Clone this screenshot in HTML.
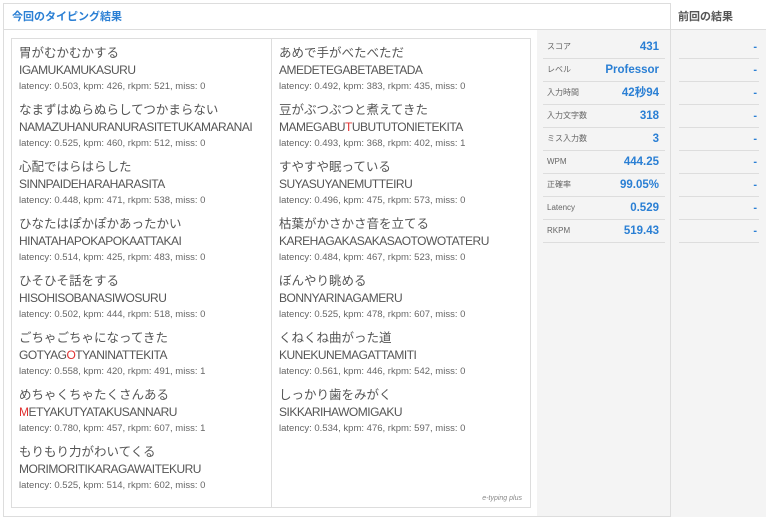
<!DOCTYPE html>
<html><head><meta charset="utf-8"><style>
*{margin:0;padding:0;box-sizing:border-box}
body{width:768px;height:520px;background:#fff;font-family:"Liberation Sans","Noto Sans CJK JP",sans-serif;color:#555;position:relative;overflow:hidden}
.outer{position:absolute;left:3px;top:3px;width:763px;height:514px;border:1px solid #ddd;background:#fff}
.hdr{position:absolute;left:3px;top:3px;width:667px;height:27px;border-bottom:1px solid #ddd}
.title{position:absolute;left:12px;top:8px;font-size:11px;font-weight:bold;color:#2a7fd4}
.rcol{position:absolute;left:670px;top:3px;width:96px;height:514px;border-left:1px solid #ddd;background:#f4f4f4}
.rhdr{position:absolute;left:0;top:0;width:95px;height:27px;background:#fff;border-bottom:1px solid #ddd;font-size:11px;font-weight:bold;color:#555;padding:5px 0 0 7px}
.stat{position:absolute;left:537px;top:30px;width:133px;height:486px;background:#f4f4f4}
.box{position:absolute;left:11px;top:38px;width:520px;height:470px;border:1px solid #ddd;background:#fff}
.div{position:absolute;left:259px;top:0;width:1px;height:468px;background:#ddd}
.e{position:absolute;width:255px}
.j{font-size:12.5px;height:17px;line-height:17px;color:#555}
.r{font-size:12px;letter-spacing:-0.5px;height:17px;line-height:17px;color:#555;white-space:nowrap}
.s{font-size:9.5px;height:16px;line-height:16px;color:#666}
.red{color:#e03030}
.row{position:absolute;left:6px;width:122px;height:23px;border-bottom:1px solid #ddd;line-height:22px}
.row .l{position:absolute;left:4px;top:0;font-size:8px;color:#666}
.row .v{position:absolute;right:6px;top:0;font-size:11.5px;font-weight:bold;color:#2a7fd4}
.rr{position:absolute;left:8px;width:80px;height:23px;border-bottom:1px solid #ddd;line-height:22px}
.rr span{position:absolute;right:2px;top:0;font-size:11px;font-weight:bold;color:#2a7fd4}
.foot{position:absolute;right:8px;bottom:5px;font-size:7px;font-style:italic;color:#888}
</style></head><body>
<div class="outer"></div>
<div class="hdr"></div>
<div class="title">今回のタイピング結果</div>
<div class="stat">
<div class="row" style="top:6px"><span class="l">スコア</span><span class="v">431</span></div>
<div class="row" style="top:29px"><span class="l">レベル</span><span class="v">Professor</span></div>
<div class="row" style="top:52px"><span class="l">入力時間</span><span class="v">42秒94</span></div>
<div class="row" style="top:75px"><span class="l">入力文字数</span><span class="v">318</span></div>
<div class="row" style="top:98px"><span class="l">ミス入力数</span><span class="v">3</span></div>
<div class="row" style="top:121px"><span class="l">WPM</span><span class="v">444.25</span></div>
<div class="row" style="top:144px"><span class="l">正確率</span><span class="v">99.05%</span></div>
<div class="row" style="top:167px"><span class="l">Latency</span><span class="v">0.529</span></div>
<div class="row" style="top:190px"><span class="l">RKPM</span><span class="v">519.43</span></div>
</div>
<div class="rcol">
<div class="rhdr">前回の結果</div>
<div class="rr" style="top:33px"><span>-</span></div>
<div class="rr" style="top:56px"><span>-</span></div>
<div class="rr" style="top:79px"><span>-</span></div>
<div class="rr" style="top:102px"><span>-</span></div>
<div class="rr" style="top:125px"><span>-</span></div>
<div class="rr" style="top:148px"><span>-</span></div>
<div class="rr" style="top:171px"><span>-</span></div>
<div class="rr" style="top:194px"><span>-</span></div>
<div class="rr" style="top:217px"><span>-</span></div>
</div>
<div class="box">
<div class="div"></div>
<div class="e" style="left:7px;top:6px"><div class="j">胃がむかむかする</div><div class="r">IGAMUKAMUKASURU</div><div class="s">latency: 0.503, kpm: 426, rkpm: 521, miss: 0</div></div>
<div class="e" style="left:7px;top:63px"><div class="j">なまずはぬらぬらしてつかまらない</div><div class="r">NAMAZUHANURANURASITETUKAMARANAI</div><div class="s">latency: 0.525, kpm: 460, rkpm: 512, miss: 0</div></div>
<div class="e" style="left:7px;top:120px"><div class="j">心配ではらはらした</div><div class="r">SINNPAIDEHARAHARASITA</div><div class="s">latency: 0.448, kpm: 471, rkpm: 538, miss: 0</div></div>
<div class="e" style="left:7px;top:177px"><div class="j">ひなたはぽかぽかあったかい</div><div class="r">HINATAHAPOKAPOKAATTAKAI</div><div class="s">latency: 0.514, kpm: 425, rkpm: 483, miss: 0</div></div>
<div class="e" style="left:7px;top:234px"><div class="j">ひそひそ話をする</div><div class="r">HISOHISOBANASIWOSURU</div><div class="s">latency: 0.502, kpm: 444, rkpm: 518, miss: 0</div></div>
<div class="e" style="left:7px;top:291px"><div class="j">ごちゃごちゃになってきた</div><div class="r">GOTYAG<span class="red">O</span>TYANINATTEKITA</div><div class="s">latency: 0.558, kpm: 420, rkpm: 491, miss: 1</div></div>
<div class="e" style="left:7px;top:348px"><div class="j">めちゃくちゃたくさんある</div><div class="r"><span class="red">M</span>ETYAKUTYATAKUSANNARU</div><div class="s">latency: 0.780, kpm: 457, rkpm: 607, miss: 1</div></div>
<div class="e" style="left:7px;top:405px"><div class="j">もりもり力がわいてくる</div><div class="r">MORIMORITIKARAGAWAITEKURU</div><div class="s">latency: 0.525, kpm: 514, rkpm: 602, miss: 0</div></div>

<div class="e" style="left:267px;top:6px"><div class="j">あめで手がべたべただ</div><div class="r">AMEDETEGABETABETADA</div><div class="s">latency: 0.492, kpm: 383, rkpm: 435, miss: 0</div></div>
<div class="e" style="left:267px;top:63px"><div class="j">豆がぶつぶつと煮えてきた</div><div class="r">MAMEGABU<span class="red">T</span>UBUTUTONIETEKITA</div><div class="s">latency: 0.493, kpm: 368, rkpm: 402, miss: 1</div></div>
<div class="e" style="left:267px;top:120px"><div class="j">すやすや眠っている</div><div class="r">SUYASUYANEMUTTEIRU</div><div class="s">latency: 0.496, kpm: 475, rkpm: 573, miss: 0</div></div>
<div class="e" style="left:267px;top:177px"><div class="j">枯葉がかさかさ音を立てる</div><div class="r">KAREHAGAKASAKASAOTOWOTATERU</div><div class="s">latency: 0.484, kpm: 467, rkpm: 523, miss: 0</div></div>
<div class="e" style="left:267px;top:234px"><div class="j">ぼんやり眺める</div><div class="r">BONNYARINAGAMERU</div><div class="s">latency: 0.525, kpm: 478, rkpm: 607, miss: 0</div></div>
<div class="e" style="left:267px;top:291px"><div class="j">くねくね曲がった道</div><div class="r">KUNEKUNEMAGATTAMITI</div><div class="s">latency: 0.561, kpm: 446, rkpm: 542, miss: 0</div></div>
<div class="e" style="left:267px;top:348px"><div class="j">しっかり歯をみがく</div><div class="r">SIKKARIHAWOMIGAKU</div><div class="s">latency: 0.534, kpm: 476, rkpm: 597, miss: 0</div></div>
<div class="foot">e-typing plus</div>
</div>
</body></html>
